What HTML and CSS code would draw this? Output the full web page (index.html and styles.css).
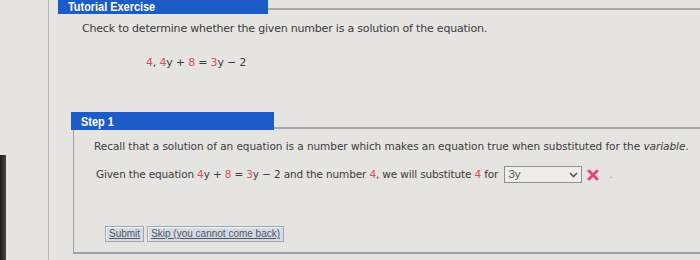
FILE: index.html
```html
<!DOCTYPE html>
<html>
<head>
<meta charset="utf-8">
<link rel="stylesheet" href="styles.css">
</head>
<body>
<div class="screen">
  <div class="edge"></div>
  <div class="panel">
    <div class="tabrow">
      <div class="tab"><span class="tabtext">Tutorial Exercise</span></div>
      <div class="rule"></div>
    </div>
    <p class="intro">Check to determine whether the given number is a solution of the equation.</p>
    <p class="eq"><span class="r">4</span>, <span class="r">4</span>y + <span class="r">8</span> = <span class="r">3</span>y − 2</p>
    <div class="step">
      <div class="tabrow steprow">
        <div class="tab steptab"><span class="tabtext">Step 1</span></div>
        <div class="rule steprule"></div>
      </div>
      <div class="stepbody">
        <p class="recall">Recall that a solution of an equation is a number which makes an equation true when substituted for the <i>variable</i>.</p>
        <p class="given">Given the equation <span class="r">4</span>y + <span class="r">8</span> = <span class="r">3</span>y − 2 and the number <span class="r">4</span>, we will substitute <span class="r">4</span> for <span class="select"><span class="val">3y</span><svg class="chev" width="9" height="6" viewBox="0 0 9 6"><path d="M1 1 L4.5 4.5 L8 1" fill="none" stroke="#555" stroke-width="1.6"/></svg></span><svg class="xmark" width="12" height="12" viewBox="0 0 12 12"><path d="M2 2 L10 10 M10 2 L2 10" stroke="#e2457a" stroke-width="3" stroke-linecap="round"/></svg><span class="dot">.</span></p>
        <div class="buttons">
          <span class="btn">Submit</span>
          <span class="btn">Skip (you cannot come back)</span>
        </div>
      </div>
    </div>
  </div>
</div>
</body>
</html>
```
FILE: styles.css
```css
html, body {
  margin: 0;
  padding: 0;
}
body {
  width: 700px;
  height: 260px;
  overflow: hidden;
  background: #e5e4e0;
  font-family: "DejaVu Sans", Verdana, sans-serif;
  color: #3b3b3d;
}
.screen {
  position: relative;
  display: flex;
  height: 260px;
}
.edge {
  position: absolute;
  left: 0;
  top: 155px;
  width: 6px;
  height: 105px;
  background: linear-gradient(to right, #1e1a18, #4a4540);
}
.panel {
  margin-left: 48px;
  border-left: 1px solid #b9b8b4;
  flex: 1;
  padding-left: 9px;
}
.tabrow {
  display: flex;
  align-items: flex-end;
}
.tab {
  background: #1c5cc6;
  color: #fff;
  font-family: "Liberation Sans", Arial, sans-serif;
  font-weight: bold;
  font-size: 13px;
  width: 200px;
  padding-left: 10px;
  height: 14px;
  line-height: 13px;
  overflow: hidden;
}
.tabtext {
  display: inline-block;
  transform: scaleX(0.84);
  transform-origin: left center;
  white-space: nowrap;
}
.rule {
  flex: 1;
  border-bottom: 2px solid #a7a9ae;
  margin-bottom: 4px;
}
.intro {
  margin: 8px 0 0 24px;
  font-size: 11px;
  line-height: 14px;
  letter-spacing: -0.2px;
}
.eq {
  margin: 20px 0 0 88px;
  font-size: 11px;
  line-height: 14px;
  letter-spacing: -0.2px;
}
.r {
  color: #d8505a;
}
.step {
  margin-top: 42px;
  margin-left: 13px;
}
.steptab {
  height: 18px;
  line-height: 20px;
  width: 193px;
  font-size: 13px;
}
.steprule {
  margin-bottom: 1px;
}
.stepbody {
  border-left: 1px solid #9da0a6;
  border-bottom: 2px solid #9a9da3;
  margin-left: 2px;
  padding: 9px 0 10px 20px;
}
.recall {
  margin: 0;
  font-size: 10.5px;
  line-height: 14px;
  letter-spacing: -0.05px;
  white-space: nowrap;
}
.given {
  margin: 13px 0 0 2px;
  font-size: 10.5px;
  line-height: 17px;
  letter-spacing: -0.15px;
  display: flex;
  align-items: center;
  white-space: pre;
}
.select {
  display: inline-flex;
  align-items: center;
  justify-content: space-between;
  width: 70px;
  height: 15px;
  border: 1px solid #8e9096;
  background: #eeedea;
  margin-left: 3px;
  padding: 0 3px 0 3px;
  font-family: "Liberation Sans", Arial, sans-serif;
  font-size: 11.5px;
  color: #555;
}
.xmark {
  margin-left: 5px;
}
.dot {
  margin-left: 10px;
  color: #999;
}
.buttons {
  display: flex;
  gap: 3px;
  margin: 43px 0 0 11px;
}
.btn {
  background: #d6dbe4;
  border: 1px solid #9ea6b5;
  box-shadow: inset 1px 1px 0 #f2f4f8;
  color: #4e5566;
  font-family: "Liberation Sans", Arial, sans-serif;
  font-size: 10px;
  text-decoration: underline;
  padding: 0 3px;
  height: 14px;
  line-height: 14px;
}
```
